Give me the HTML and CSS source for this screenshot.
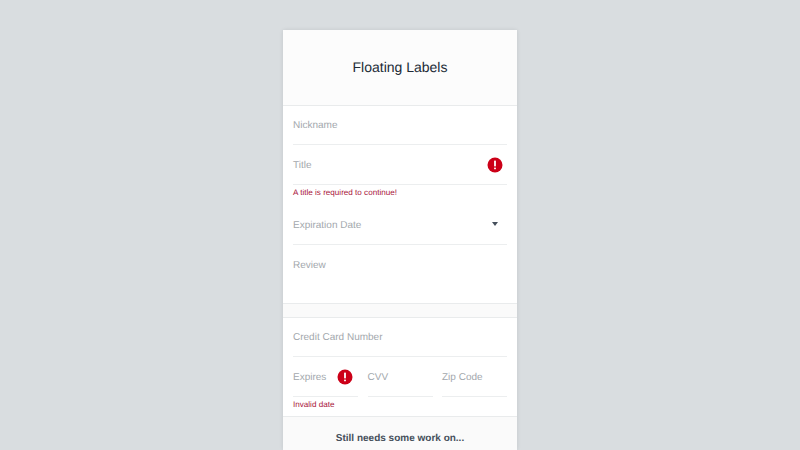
FILE: index.html
```html
<!DOCTYPE html>
<html lang="en">

<head>
    <meta charset="UTF-8">
    <title>Floating Labels</title>
    <link rel="stylesheet" href="styles.css">
</head>

<body>
    <div class="card">
        <div class="card-header">
            <h1>Floating Labels</h1>
        </div>

        <div class="card-section">
            <div class="field field-first">
                <span class="label">Nickname</span>
            </div>
            <div class="field">
                <span class="label">Title</span>
                <svg class="alert" viewBox="0 0 16 16"><circle cx="8" cy="8" r="7.5" fill="#cc0018"/><rect x="7.1" y="3.6" width="1.8" height="5.8" rx="0.6" fill="#fff"/><rect x="7.1" y="10.5" width="1.8" height="1.8" rx="0.6" fill="#fff"/></svg>
            </div>
            <p class="error error-title">A title is required to continue!</p>
            <div class="field field-select">
                <span class="label">Expiration Date</span>
                <span class="caret"></span>
            </div>
            <div class="field field-area">
                <span class="label">Review</span>
            </div>
        </div>

        <div class="spacer"></div>

        <div class="card-section">
            <div class="field field-first">
                <span class="label">Credit Card Number</span>
            </div>
            <div class="field-row">
                <div class="field">
                    <span class="label">Expires</span>
                    <svg class="alert" viewBox="0 0 16 16"><circle cx="8" cy="8" r="7.5" fill="#cc0018"/><rect x="7.1" y="3.6" width="1.8" height="5.8" rx="0.6" fill="#fff"/><rect x="7.1" y="10.5" width="1.8" height="1.8" rx="0.6" fill="#fff"/></svg>
                </div>
                <div class="field">
                    <span class="label">CVV</span>
                </div>
                <div class="field">
                    <span class="label">Zip Code</span>
                </div>
            </div>
            <p class="error error-date">Invalid date</p>
        </div>

        <div class="card-footer">
            <h2>Still needs some work on...</h2>
        </div>
    </div>
</body>

</html>
```

FILE: styles.css
```css
* {
    margin: 0;
    padding: 0;
    box-sizing: border-box;
}

html,
body {
    height: 450px;
    overflow: hidden;
}

body {
    font-family: "Liberation Sans", Arial, sans-serif;
    text-rendering: geometricPrecision;
    background-color: #d9dde0;
    display: flex;
    justify-content: center;
    align-items: flex-start;
    padding-top: 30px;
}

.card {
    width: 234px;
    height: 420px;
    flex: none;
    overflow: hidden;
    background-color: #fff;
    box-shadow: 0 0 4px rgba(0, 0, 0, 0.1);
}

.card-header {
    height: 76px;
    background-color: #fcfcfc;
    border-bottom: 1px solid #e9ebec;
    display: flex;
    justify-content: center;
    align-items: center;
}

.card-header h1 {
    font-size: 14px;
    font-weight: 400;
    color: #212b36;
    margin-bottom: 2px;
}

.card-section {
    padding: 0 10px;
}

.field {
    height: 40px;
    display: flex;
    align-items: center;
    justify-content: space-between;
    border-bottom: 1px solid #eceeef;
}

.field-first {
    height: 39px;
}

.label {
    font-size: 10px;
    color: #a3a8ad;
    margin-top: 2px;
}

.field-first .label {
    margin-top: 0;
}

.alert {
    width: 16px;
    height: 16px;
    margin-right: 4px;
}

.field-row .alert {
    margin-right: 5px;
}

.error {
    font-size: 8.1px;
    line-height: 10px;
    color: #a8133a;
}

.error-title {
    padding-top: 3px;
    height: 20px;
}

.field-select .caret {
    width: 0;
    height: 0;
    margin-right: 9px;
    margin-bottom: 2px;
    border-left: 3.5px solid transparent;
    border-right: 3.5px solid transparent;
    border-top: 4.5px solid #454f5b;
}

.field-area {
    height: 58px;
    align-items: flex-start;
    padding-top: 13px;
    border-bottom: none;
}

.spacer {
    height: 15px;
    background-color: #fafafa;
    border-top: 1px solid #e9ebec;
    border-bottom: 1px solid #e9ebec;
}

.field-row {
    display: grid;
    grid-template-columns: 65px 65px 65px;
    gap: 9.5px;
}

.error-date {
    padding-top: 3px;
    height: 19px;
}

.card-footer {
    background-color: #fafafa;
    border-top: 1px solid #e9ebec;
    height: 60px;
    padding-top: 16px;
    text-align: center;
}

.card-footer h2 {
    font-size: 10px;
    font-weight: 700;
    color: #454f5b;
}
```
